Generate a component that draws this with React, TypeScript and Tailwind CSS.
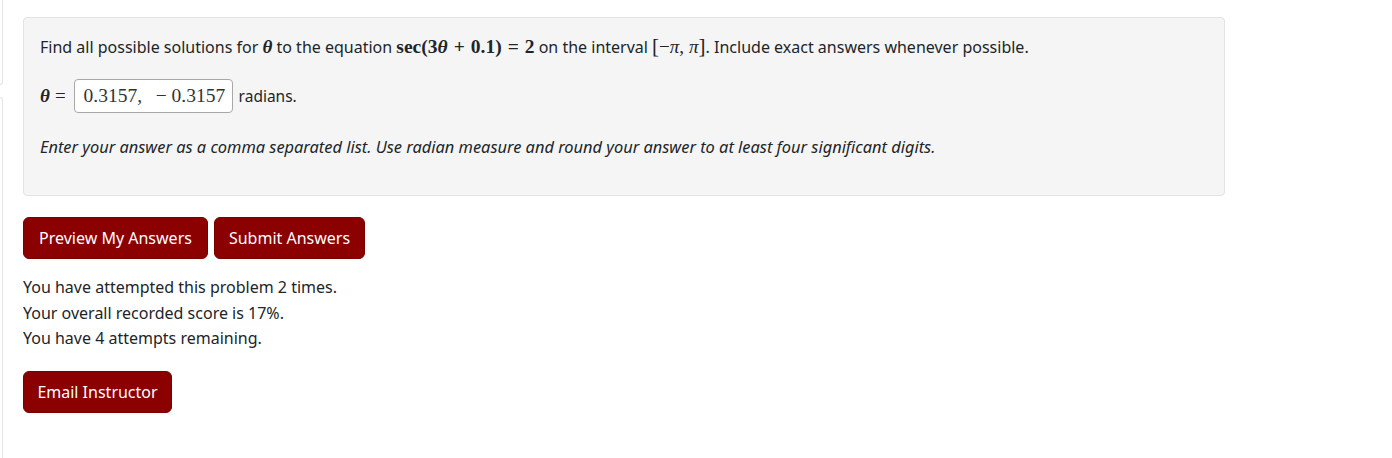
import React from 'react';

const SANS = { fontFamily: '"Segoe UI", "Noto Sans", "Open Sans", sans-serif' };
const MATH = { fontFamily: '"Liberation Serif", "DejaVu Serif", serif' };

function Op({ children }: { children: React.ReactNode }) {
  return <span className="mx-[6px]">{children}</span>;
}

export default function App() {
  return (
    <div className="relative min-h-[458px] bg-white text-[16px] leading-[24px] text-[#212529]" style={SANS}>
      {/* sidebar edges peeking in at left */}
      <div className="absolute left-0 top-0 h-[85px] w-[3px] rounded-br-[4px] border-r border-b border-[#e5e5e5]" />
      <div className="absolute left-0 top-[97px] bottom-0 w-[3px] rounded-tr-[4px] border-r border-t border-[#e5e5e5]" />

      <div className="pl-[23px] pt-[17px]">
        <div className="w-[1202px] rounded-[4px] border border-[#e3e3e3] bg-[#f5f5f5] px-[16px] pt-[16px] pb-[36px]">
          <p className="text-[16px]">
            Find all possible solutions for{' '}
            <b className="text-[19px] italic" style={MATH}>θ</b> to the equation{' '}
            <b style={MATH} className="text-[19.5px]">
              sec(3<i>θ</i><Op>+</Op>0.1)<Op>=</Op>2
            </b>{' '}
            on the interval{' '}
            <span style={MATH} className="text-[19px]">
              <span className="text-[21px]">[</span>−<i>π</i>,<span className="ml-[5px]" /><i>π</i>
              <span className="text-[21px]">]</span>
            </span>
            . Include exact answers whenever possible.
          </p>
          <div className="mt-[20px] flex h-[34px] items-center">
            <span style={MATH} className="mr-[8px] whitespace-nowrap text-[19px]">
              <b className="italic">θ</b>
              <span className="ml-[5px]">=</span>
            </span>
            <div
              className="flex h-[34px] w-[159px] items-center whitespace-nowrap rounded-[4px] border border-[#a8a8a8] bg-white px-[9px] text-[19.5px] text-[#333]"
              style={MATH}
            >
              0.3157,&nbsp;&nbsp;&thinsp;−&nbsp;0.3157
            </div>
            <span className="ml-[6px] text-[15.5px]">radians.</span>
          </div>
          <p className="mt-[22px] text-[16.4px] italic">
            Enter your answer as a comma separated list. Use radian measure and round your answer to at least four significant digits.
          </p>
        </div>

        <div className="mt-[21px] flex gap-[6px]">
          <button className="h-[42px] w-[185px] rounded-[6px] border border-[#7a0000] bg-[#8b0000] text-[16px] text-white">
            Preview My Answers
          </button>
          <button className="h-[42px] w-[151px] rounded-[6px] border border-[#7a0000] bg-[#8b0000] text-[16px] text-white">
            Submit Answers
          </button>
        </div>

        <div className="mt-[16px] text-[16px] leading-[25.5px]">
          <div>You have attempted this problem 2 times.</div>
          <div>Your overall recorded score is 17%.</div>
          <div>You have 4 attempts remaining.</div>
        </div>

        <button className="mt-[19px] h-[42px] w-[149px] rounded-[6px] border border-[#7a0000] bg-[#8b0000] text-[16px] text-white">
          Email Instructor
        </button>
      </div>
    </div>
  );
}
